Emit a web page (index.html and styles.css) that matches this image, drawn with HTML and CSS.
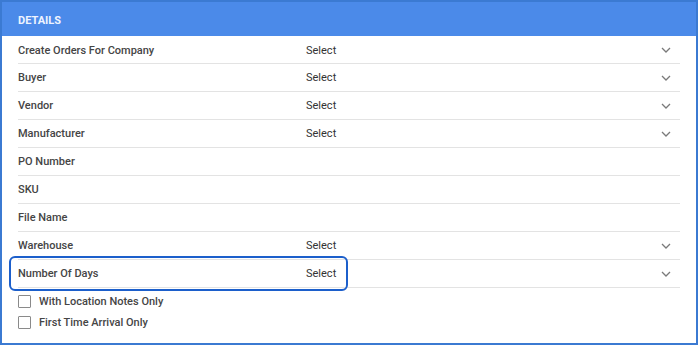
FILE: index.html
```html
<!DOCTYPE html>
<html lang="en">
    <head>
        <meta charset="UTF-8">
        <title>details</title>
        <link rel="stylesheet" href="styles.css">
    </head>
    <body>
        <div class="panel">
            <div class="panel_head">DETAILS</div>
            <div class="rows">
                <div class="row">
                    <div class="lbl">Create Orders For Company</div>
                    <div class="val">Select</div>
                    <svg class="chev" viewBox="0 0 10 6"><path d="M1 1 L5 5 L9 1"/></svg>
                </div>
                <div class="row">
                    <div class="lbl">Buyer</div>
                    <div class="val">Select</div>
                    <svg class="chev" viewBox="0 0 10 6"><path d="M1 1 L5 5 L9 1"/></svg>
                </div>
                <div class="row">
                    <div class="lbl">Vendor</div>
                    <div class="val">Select</div>
                    <svg class="chev" viewBox="0 0 10 6"><path d="M1 1 L5 5 L9 1"/></svg>
                </div>
                <div class="row">
                    <div class="lbl">Manufacturer</div>
                    <div class="val">Select</div>
                    <svg class="chev" viewBox="0 0 10 6"><path d="M1 1 L5 5 L9 1"/></svg>
                </div>
                <div class="row">
                    <div class="lbl">PO Number</div>
                </div>
                <div class="row">
                    <div class="lbl">SKU</div>
                </div>
                <div class="row">
                    <div class="lbl">File Name</div>
                </div>
                <div class="row">
                    <div class="lbl">Warehouse</div>
                    <div class="val">Select</div>
                    <svg class="chev" viewBox="0 0 10 6"><path d="M1 1 L5 5 L9 1"/></svg>
                </div>
                <div class="row hl">
                    <div class="lbl">Number Of Days</div>
                    <div class="val">Select</div>
                    <svg class="chev" viewBox="0 0 10 6"><path d="M1 1 L5 5 L9 1"/></svg>
                    <div class="hl_box"></div>
                </div>
            </div>
            <div class="checks">
                <label class="chk"><span class="box"></span>With Location Notes Only</label>
                <label class="chk"><span class="box"></span>First Time Arrival Only</label>
            </div>
        </div>
    </body>
</html>
```

FILE: styles.css
```css
body{
    margin: 0;
    font-family: Roboto, "Liberation Sans", sans-serif;
}

.panel{
    width: 698px;
    height: 345px;
    box-sizing: border-box;
    border: 2px solid #3b7ad2;
    background-color: #fff;
}

.panel_head{
    height: 34px;
    line-height: 37px;
    background-color: #4b8ae9;
    color: #eef4ff;
    font-size: 11px;
    font-weight: 700;
    padding-left: 16px;
}

.rows{
    margin: 0 16px;
}

.row{
    display: flex;
    align-items: center;
    height: 27px;
    border-bottom: 1px solid #e3e3e3;
    position: relative;
    font-size: 11px;
    padding-top: 1px;
    box-sizing: content-box;
}

.row + .row{
    height: 27px;
    padding-top: 0;
}

.rows .row:first-child{
    height: 26px;
}

.lbl{
    width: 288px;
    color: #454545;
    font-weight: 500;
}

.val{
    color: #333;
    flex: 1;
}

.chev{
    width: 10px;
    height: 6px;
    margin-right: 9px;
    margin-left: auto;
    fill: none;
    stroke: #7a7a7a;
    stroke-width: 1.3;
}

.hl_box{
    position: absolute;
    left: -9px;
    top: -4px;
    width: 335px;
    height: 31px;
    border: 2.5px solid #1c5fcb;
    border-radius: 6px;
}

.checks{
    display: flex;
    flex-direction: column;
    gap: 8px;
    padding: 7px 0 0 16px;
}

.chk{
    display: flex;
    align-items: center;
    font-size: 11px;
    font-weight: 500;
    color: #454545;
    height: 13px;
}

.box{
    width: 11px;
    height: 11px;
    border: 1px solid #8a8a8a;
    border-radius: 1px;
    margin-right: 8px;
}
```
